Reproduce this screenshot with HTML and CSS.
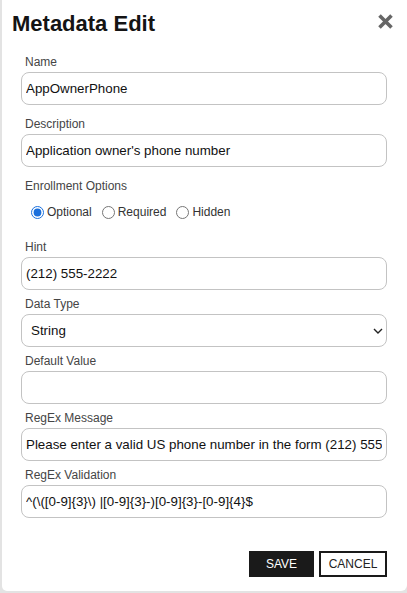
FILE: index.html
```html
<!DOCTYPE html>
<html lang="en">
<head>
<meta charset="utf-8">
<title>Metadata Edit</title>
<link rel="stylesheet" href="styles.css">
</head>
<body>
<div class="dialog">
  <header class="dialog-header">
    <h1 class="dialog-title">Metadata Edit</h1>
    <button class="close-btn" type="button" aria-label="Close">
      <svg width="17" height="17" viewBox="0 0 17 17" aria-hidden="true">
        <path d="M2.5 2.5 L14.5 14.5 M14.5 2.5 L2.5 14.5" stroke="#666" stroke-width="3.6" fill="none"/>
      </svg>
    </button>
  </header>
  <form class="form">
    <div class="field field-wide">
      <label class="field-label" for="f-name">Name</label>
      <input class="field-input" id="f-name" type="text" value="AppOwnerPhone">
    </div>
    <div class="field field-wide">
      <label class="field-label" for="f-desc">Description</label>
      <input class="field-input" id="f-desc" type="text" value="Application owner's phone number">
    </div>
    <div class="field field-radios">
      <span class="field-label">Enrollment Options</span>
      <div class="radio-row">
        <label class="radio"><input type="radio" name="enroll" checked><span>Optional</span></label>
        <label class="radio"><input type="radio" name="enroll"><span>Required</span></label>
        <label class="radio"><input type="radio" name="enroll"><span>Hidden</span></label>
      </div>
    </div>
    <div class="field field-after-radios">
      <label class="field-label" for="f-hint">Hint</label>
      <input class="field-input" id="f-hint" type="text" value="(212) 555-2222">
    </div>
    <div class="field">
      <label class="field-label" for="f-type">Data Type</label>
      <div class="select-wrap">
        <select class="field-input field-select" id="f-type">
          <option selected>String</option>
          <option>Number</option>
          <option>Boolean</option>
          <option>Date</option>
        </select>
        <svg class="select-chevron" width="10" height="6" viewBox="0 0 10 6" aria-hidden="true">
          <path d="M1 1 L5 5 L9 1" stroke="#222" stroke-width="1.4" fill="none"/>
        </svg>
      </div>
    </div>
    <div class="field">
      <label class="field-label" for="f-default">Default Value</label>
      <input class="field-input" id="f-default" type="text" value="">
    </div>
    <div class="field">
      <label class="field-label" for="f-rmsg">RegEx Message</label>
      <input class="field-input" id="f-rmsg" type="text" value="Please enter a valid US phone number in the form (212) 555-2222">
    </div>
    <div class="field">
      <label class="field-label" for="f-rval">RegEx Validation</label>
      <input class="field-input" id="f-rval" type="text" value="^(\([0-9]{3}\) |[0-9]{3}-)[0-9]{3}-[0-9]{4}$">
    </div>
    <div class="actions">
      <button class="btn btn-primary" type="button">Save</button>
      <button class="btn btn-secondary" type="button">Cancel</button>
    </div>
  </form>
</div>
</body>
</html>
```
FILE: styles.css
```css
html, body {
  margin: 0;
  padding: 0;
}

body {
  background: #e3e3e3;
  font-family: "Liberation Sans", Arial, sans-serif;
  color: #111;
}

.dialog {
  margin-left: 2px;
  width: 405px;
  height: 591px;
  background: #fff;
  border-radius: 0 0 6px 5px;
  box-sizing: border-box;
}

.dialog-header {
  display: flex;
  justify-content: space-between;
  align-items: flex-start;
  padding: 11px 13px 0 10px;
}

.dialog-title {
  margin: 0;
  font-size: 22px;
  line-height: 26px;
  font-weight: bold;
  color: #141414;
}

.close-btn {
  margin: 2px 0 0 0;
  padding: 0;
  border: 0;
  background: transparent;
  width: 17px;
  height: 17px;
  display: block;
  cursor: pointer;
}

.close-btn svg {
  display: block;
}

.form {
  padding: 18px 20px 0 19px;
}

.field {
  margin-top: 7px;
}

.field-wide {
  margin-top: 0;
  margin-bottom: 12px;
}

.field-radios {
  margin-top: 12px;
}

.field-after-radios {
  margin-top: 18px;
}

.field-label {
  display: block;
  font-size: 12px;
  line-height: 14px;
  color: #454545;
  padding-left: 4px;
  margin-bottom: 3px;
}

.field-input {
  display: block;
  width: 100%;
  height: 33px;
  box-sizing: border-box;
  margin: 0;
  border: 1px solid #c3c3c3;
  border-radius: 8px;
  padding: 0 4px;
  font-family: "Liberation Sans", Arial, sans-serif;
  font-size: 13.33px;
  color: #111;
  background: #fff;
  outline: none;
}

.select-wrap {
  position: relative;
}

.field-select {
  appearance: none;
  -webkit-appearance: none;
  padding-left: 9px;
  padding-right: 24px;
}

.select-chevron {
  position: absolute;
  right: 4px;
  top: 14px;
  pointer-events: none;
}

.radio-row {
  display: flex;
  align-items: center;
  gap: 10px;
  height: 20px;
  margin-top: 9px;
  padding-left: 10px;
}

.radio {
  display: flex;
  align-items: center;
  font-size: 12px;
  color: #333;
  cursor: pointer;
}

.radio input {
  margin: 0 3px 0 0;
  width: 13px;
  height: 13px;
  accent-color: #1a6fdc;
}

.actions {
  display: flex;
  justify-content: flex-end;
  gap: 5px;
  margin-top: 33px;
}

.btn {
  height: 26px;
  box-sizing: border-box;
  border: 2px solid #1a1a1a;
  border-radius: 0;
  font-family: "Liberation Sans", Arial, sans-serif;
  font-size: 12px;
  text-transform: uppercase;
  padding: 0;
  cursor: pointer;
}

.btn-primary {
  width: 65px;
  background: #1a1a1a;
  color: #fff;
}

.btn-secondary {
  width: 68px;
  background: #fff;
  color: #222;
}
```
